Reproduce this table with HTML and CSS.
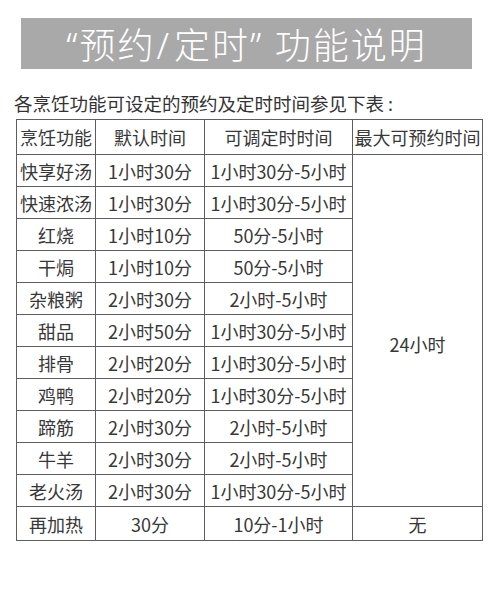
FILE: index.html
```html
<!DOCTYPE html>
<html lang="zh-CN">
<head>
<meta charset="utf-8">
<link rel="stylesheet" href="styles.css">
</head>
<body>
<div class="page">
  <div class="banner"><span class="q">“</span>预约<span class="q slash">/</span>定时<span class="q">” </span>功能说明</div>
  <p class="intro">各烹饪功能可设定的预约及定时时间参见下表<span class="colon">:</span></p>
  <table class="tbl">
    <colgroup>
      <col class="c1"><col class="c2"><col class="c3"><col class="c4">
    </colgroup>
    <tr class="hd"><td>烹饪功能</td><td>默认时间</td><td>可调定时时间</td><td>最大可预约时间</td></tr>
    <tr><td>快享好汤</td><td>1小时30分</td><td>1小时30分-5小时</td><td rowspan="11" class="span">24小时</td></tr>
    <tr><td>快速浓汤</td><td>1小时30分</td><td>1小时30分-5小时</td></tr>
    <tr><td>红烧</td><td>1小时10分</td><td>50分-5小时</td></tr>
    <tr><td>干焗</td><td>1小时10分</td><td>50分-5小时</td></tr>
    <tr><td>杂粮粥</td><td>2小时30分</td><td>2小时-5小时</td></tr>
    <tr><td>甜品</td><td>2小时50分</td><td>1小时30分-5小时</td></tr>
    <tr><td>排骨</td><td>2小时20分</td><td>1小时30分-5小时</td></tr>
    <tr><td>鸡鸭</td><td>2小时20分</td><td>1小时30分-5小时</td></tr>
    <tr><td>蹄筋</td><td>2小时30分</td><td>2小时-5小时</td></tr>
    <tr><td>牛羊</td><td>2小时30分</td><td>2小时-5小时</td></tr>
    <tr><td>老火汤</td><td>2小时30分</td><td>1小时30分-5小时</td></tr>
    <tr class="last"><td>再加热</td><td>30分</td><td>10分-1小时</td><td>无</td></tr>
  </table>
</div>
</body>
</html>
```

FILE: styles.css
```css
html, body {
  margin: 0;
  padding: 0;
  background: #ffffff;
}

.page {
  padding: 18px 0 0 0;
  font-family: "Noto Sans CJK SC", "Noto Sans", sans-serif;
  color: #333333;
}

.banner {
  margin: 0 0 0 21px;
  width: 451px;
  height: 51px;
  background: #a9a9a9;
  color: #ffffff;
  font-size: 36px;
  font-weight: 300;
  letter-spacing: 2px;
  line-height: 51px;
  text-align: center;
  white-space: pre;
}

.banner .q {
  font-family: "Noto Sans", "Noto Sans CJK SC", sans-serif;
  font-weight: 300;
}

.banner .slash {
  margin: 0 3px 0 1px;
}

.intro {
  margin: 24px 0 5px 14px;
  font-size: 18.5px;
  line-height: 20px;
  color: #333333;
}

.intro .colon {
  font-family: "Noto Sans", sans-serif;
  margin-left: 4px;
}

.tbl {
  margin-left: 16px;
  border-collapse: collapse;
  table-layout: fixed;
  width: 466px;
  font-size: 18px;
  color: #383838;
}

.c1 { width: 79px; }
.c2 { width: 109px; }
.c3 { width: 148px; }
.c4 { width: 130px; }

.tbl td {
  border: 1px solid #5e5e5e;
  padding: 0;
  height: 31px;
  text-align: center;
  vertical-align: middle;
  line-height: 22px;
  white-space: nowrap;
}

.tbl .hd td {
  height: 34px;
}

.tbl td.span {
  padding-top: 26px;
}

.tbl .last td {
  height: 33px;
}
```
